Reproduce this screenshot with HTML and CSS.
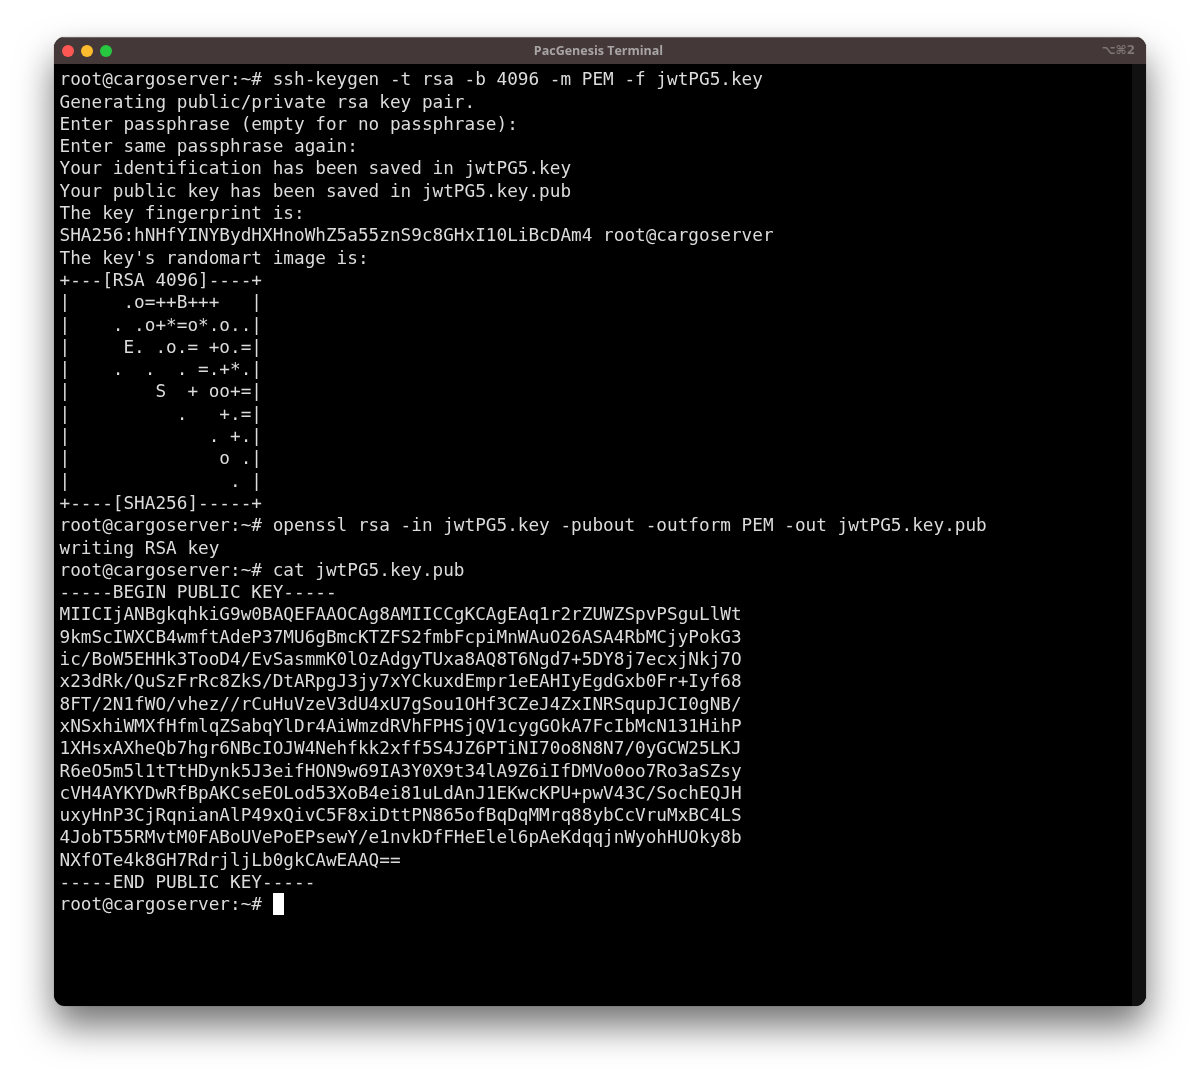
FILE: index.html
```html
<!DOCTYPE html>
<html lang="en">
<head>
<meta charset="utf-8">
<title>PacGenesis Terminal</title>
<link rel="stylesheet" href="styles.css">
</head>
<body>
<main class="window">
  <header class="titlebar">
    <div class="lights">
      <span class="light light-red"></span>
      <span class="light light-yellow"></span>
      <span class="light light-green"></span>
    </div>
    <div class="title">PacGenesis Terminal</div>
    <div class="shortcut">⌥⌘2</div>
  </header>
  <div class="body">
<pre class="terminal">root@cargoserver:~# ssh-keygen -t rsa -b 4096 -m PEM -f jwtPG5.key
Generating public/private rsa key pair.
Enter passphrase (empty for no passphrase):
Enter same passphrase again:
Your identification has been saved in jwtPG5.key
Your public key has been saved in jwtPG5.key.pub
The key fingerprint is:
SHA256:hNHfYINYBydHXHnoWhZ5a55znS9c8GHxI10LiBcDAm4 root@cargoserver
The key's randomart image is:
+---[RSA 4096]----+
|     .o=++B+++   |
|    . .o+*=o*.o..|
|     E. .o.= +o.=|
|    .  .  . =.+*.|
|        S  + oo+=|
|          .   +.=|
|             . +.|
|              o .|
|               . |
+----[SHA256]-----+
root@cargoserver:~# openssl rsa -in jwtPG5.key -pubout -outform PEM -out jwtPG5.key.pub
writing RSA key
root@cargoserver:~# cat jwtPG5.key.pub
-----BEGIN PUBLIC KEY-----
MIICIjANBgkqhkiG9w0BAQEFAAOCAg8AMIICCgKCAgEAq1r2rZUWZSpvPSguLlWt
9kmScIWXCB4wmftAdeP37MU6gBmcKTZFS2fmbFcpiMnWAuO26ASA4RbMCjyPokG3
ic/BoW5EHHk3TooD4/EvSasmmK0lOzAdgyTUxa8AQ8T6Ngd7+5DY8j7ecxjNkj7O
x23dRk/QuSzFrRc8ZkS/DtARpgJ3jy7xYCkuxdEmpr1eEAHIyEgdGxb0Fr+Iyf68
8FT/2N1fWO/vhez//rCuHuVzeV3dU4xU7gSou1OHf3CZeJ4ZxINRSqupJCI0gNB/
xNSxhiWMXfHfmlqZSabqYlDr4AiWmzdRVhFPHSjQV1cygGOkA7FcIbMcN131HihP
1XHsxAXheQb7hgr6NBcIOJW4Nehfkk2xff5S4JZ6PTiNI70o8N8N7/0yGCW25LKJ
R6eO5m5l1tTtHDynk5J3eifHON9w69IA3Y0X9t34lA9Z6iIfDMVo0oo7Ro3aSZsy
cVH4AYKYDwRfBpAKCseEOLod53XoB4ei81uLdAnJ1EKwcKPU+pwV43C/SochEQJH
uxyHnP3CjRqnianAlP49xQivC5F8xiDttPN865ofBqDqMMrq88ybCcVruMxBC4LS
4JobT55RMvtM0FABoUVePoEPsewY/e1nvkDfFHeElel6pAeKdqqjnWyohHUOky8b
NXfOTe4k8GH7RdrjljLb0gkCAwEAAQ==
-----END PUBLIC KEY-----
root@cargoserver:~# <span class="cursor"></span></pre>
    <div class="scrollbar"></div>
  </div>
</main>
</body>
</html>
```
FILE: styles.css
```css
html, body {
  margin: 0;
  background: #fff;
}
body {
  padding: 37px 54px 76px;
  height: 1082px;
  box-sizing: border-box;
  overflow: hidden;
}
.window {
  height: 969px;
  display: flex;
  flex-direction: column;
  background: #000;
  border-radius: 11px;
  overflow: hidden;
  box-shadow: 0 20px 36px rgba(0, 0, 0, 0.55), 0 0 1px rgba(0, 0, 0, 0.6);
}
.titlebar {
  height: 27px;
  flex: none;
  display: grid;
  grid-template-columns: 1fr auto 1fr;
  align-items: center;
  padding: 0 11px 0 8px;
  background: #443838;
  border-top: 1px solid #6f6767;
  box-sizing: border-box;
}
.lights {
  display: flex;
  gap: 7px;
}
.light {
  width: 12px;
  height: 12px;
  border-radius: 50%;
  filter: blur(0.3px);
}
.light-red { background: #fc5753; }
.light-yellow { background: #fdbc2e; }
.light-green { background: #27c840; }
.title {
  font: 700 12.5px/1 "Open Sans", "Liberation Sans", sans-serif;
  color: #a9a5a5;
  filter: blur(0.3px);
}
.shortcut {
  justify-self: end;
  font: 700 12px/1 "DejaVu Sans", sans-serif;
  color: #7f7676;
  filter: blur(0.3px);
  transform: translateY(-1px);
}
.body {
  flex: 1;
  display: flex;
  min-height: 0;
}
.terminal {
  flex: 1;
  margin: 0;
  padding: 4.3px 0 0 5.5px;
  font-family: "DejaVu Sans Mono", monospace;
  font-size: 17.72px;
  line-height: 22.3px;
  color: #dcdcdc;
  filter: blur(0.35px);
}
.cursor {
  display: inline-block;
  width: 11px;
  height: 22px;
  vertical-align: -5px;
  background: #fff;
}
.scrollbar {
  width: 14px;
  flex: none;
  background: #111;
}
```
